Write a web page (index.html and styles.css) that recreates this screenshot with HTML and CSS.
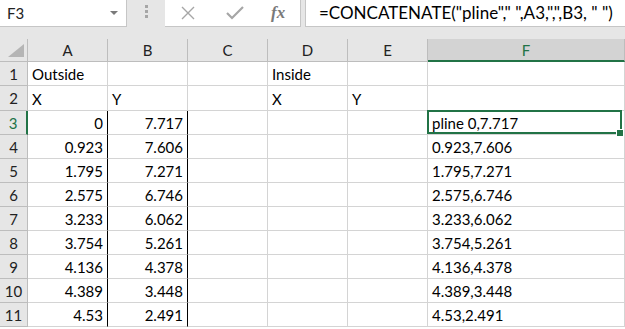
FILE: index.html
```html
<!DOCTYPE html>
<html lang="en">
<head>
  <meta charset="UTF-8">
  <title>Sheet</title>
  <link rel="stylesheet" href="styles.css">
</head>
<body>

  <!-- formula bar -->
  <div class="bar">
    <div class="namebox">
      <span>F3</span>
      <span class="drop"></span>
    </div>
    <div class="grip"><i></i><i></i><i></i></div>
    <div class="buttons">
      <svg class="ico" width="14" height="14" viewBox="0 0 14 14"><path d="M1 1 L13 13 M13 1 L1 13" stroke="#a6a6a6" stroke-width="1.4" fill="none"/></svg>
      <svg class="ico" width="18" height="14" viewBox="0 0 18 14"><path d="M1 7 L6 12 L17 1" stroke="#a6a6a6" stroke-width="2.2" fill="none"/></svg>
      <span class="fx">fx</span>
    </div>
    <div class="formula">=CONCATENATE("pline"," ",A3,",",B3, " ")</div>
  </div>

  <!-- grid -->
  <div class="sheet">
    <div class="hd corner"><span class="tri"></span></div>
    <div class="hd col">A</div>
    <div class="hd col">B</div>
    <div class="hd col">C</div>
    <div class="hd col">D</div>
    <div class="hd col">E</div>
    <div class="hd col sel">F</div>

    <div class="hd row">1</div>
    <div class="c">Outside</div><div class="c"></div><div class="c"></div><div class="c">Inside</div><div class="c"></div><div class="c"></div>

    <div class="hd row">2</div>
    <div class="c">X</div><div class="c">Y</div><div class="c"></div><div class="c">X</div><div class="c">Y</div><div class="c"></div>

    <div class="hd row sel">3</div>
    <div class="c n bk">0</div><div class="c n bk">7.717</div><div class="c"></div><div class="c"></div><div class="c"></div>
    <div class="c active">pline 0,7.717<span class="box"></span><span class="handle"></span></div>

    <div class="hd row">4</div>
    <div class="c n bk">0.923</div><div class="c n bk">7.606</div><div class="c"></div><div class="c"></div><div class="c"></div><div class="c">0.923,7.606</div>

    <div class="hd row">5</div>
    <div class="c n bk">1.795</div><div class="c n bk">7.271</div><div class="c"></div><div class="c"></div><div class="c"></div><div class="c">1.795,7.271</div>

    <div class="hd row">6</div>
    <div class="c n bk">2.575</div><div class="c n bk">6.746</div><div class="c"></div><div class="c"></div><div class="c"></div><div class="c">2.575,6.746</div>

    <div class="hd row">7</div>
    <div class="c n bk">3.233</div><div class="c n bk">6.062</div><div class="c"></div><div class="c"></div><div class="c"></div><div class="c">3.233,6.062</div>

    <div class="hd row">8</div>
    <div class="c n bk">3.754</div><div class="c n bk">5.261</div><div class="c"></div><div class="c"></div><div class="c"></div><div class="c">3.754,5.261</div>

    <div class="hd row">9</div>
    <div class="c n bk">4.136</div><div class="c n bk">4.378</div><div class="c"></div><div class="c"></div><div class="c"></div><div class="c">4.136,4.378</div>

    <div class="hd row">10</div>
    <div class="c n bk">4.389</div><div class="c n bk">3.448</div><div class="c"></div><div class="c"></div><div class="c"></div><div class="c">4.389,3.448</div>

    <div class="hd row">11</div>
    <div class="c n bk">4.53</div><div class="c n bk">2.491</div><div class="c"></div><div class="c"></div><div class="c"></div><div class="c">4.53,2.491</div>
  </div>

</body>
</html>
```

FILE: styles.css
```css
* {
  box-sizing: border-box;
}
body {
  margin: 0;
  width: 625px;
  height: 329px;
  overflow: hidden;
  background: #ffffff;
  font-family: Lato, "Liberation Sans", sans-serif;
  color: #000;
}

/* formula bar */
.bar {
  display: flex;
  height: 39px;
  background: #e6e6e6;
  align-items: flex-start;
}
.namebox {
  width: 127px;
  height: 27px;
  background: #fff;
  border-right: 1px solid #c6c6c6;
  border-bottom: 1px solid #c6c6c6;
  display: flex;
  align-items: center;
  justify-content: space-between;
  padding: 0 8px 0 7px;
  font-size: 15px;
  color: #222;
}
.drop {
  width: 0;
  height: 0;
  border-left: 4px solid transparent;
  border-right: 4px solid transparent;
  border-top: 4px solid #7a7a7a;
}
.grip {
  width: 38px;
  display: flex;
  flex-direction: column;
  align-items: center;
  gap: 2px;
  padding-top: 5px;
}
.grip i {
  display: block;
  width: 3px;
  height: 3px;
  background: #a6a6a6;
}
.buttons {
  width: 136px;
  height: 27px;
  background: #fff;
  border-right: 1px solid #c6c6c6;
  border-bottom: 1px solid #c6c6c6;
  display: flex;
  align-items: center;
  padding-left: 16px;
  gap: 31px;
}
.fx {
  font-family: "Liberation Serif", serif;
  font-style: italic;
  font-weight: bold;
  font-size: 17px;
  color: #7a7a7a;
  margin-left: -4px;
}
.formula {
  flex: 1;
  height: 27px;
  margin-left: 4px;
  background: #fff;
  border-bottom: 1px solid #c6c6c6;
  border-left: 1px solid #c6c6c6;
  font-size: 17px;
  line-height: 26px;
  padding-left: 13px;
  white-space: nowrap;
}

/* grid */
.sheet {
  display: grid;
  grid-template-columns: 28px 80px 80px 80px 80px 80px 1fr;
  grid-template-rows: 23px 24px 25px repeat(9, 24px);
}
.hd {
  background: #e6e6e6;
  border-right: 1px solid #bdbdbd;
  border-bottom: 1px solid #bdbdbd;
  font-size: 15px;
  display: flex;
  align-items: center;
  justify-content: center;
  color: #222;
}
.corner {
  position: relative;
}
.tri {
  position: absolute;
  right: 3px;
  bottom: 4px;
  width: 0;
  height: 0;
  border-left: 16px solid transparent;
  border-bottom: 13px solid #b5b5b5;
}
.col.sel {
  background: #d3d3d3;
  color: #217346;
  border-bottom: 2px solid #217346;
}
.row.sel {
  color: #217346;
  border-right: 2px solid #217346;
}
.c {
  border-right: 1px solid #d4d4d4;
  border-bottom: 1px solid #d4d4d4;
  font-size: 15px;
  display: flex;
  align-items: flex-end;
  padding: 0 4px 2px 4px;
  white-space: nowrap;
  position: relative;
}
.n {
  justify-content: flex-end;
}
.bk {
  border-right-color: #000;
}
.active .box {
  position: absolute;
  left: -1px;
  top: -1px;
  right: 2px;
  bottom: 0;
  border: 2px solid #217346;
}
.active .handle {
  position: absolute;
  right: 0;
  bottom: -3px;
  width: 6px;
  height: 6px;
  background: #217346;
  border: 1px solid #fff;
  box-sizing: content-box;
}
```
